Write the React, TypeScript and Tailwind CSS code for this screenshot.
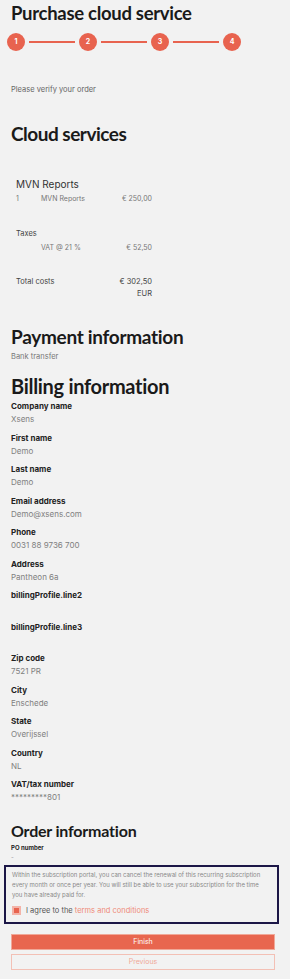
import React from "react";

const H = { fontFamily: "Lato, 'Open Sans', sans-serif" };
const B = { fontFamily: "Inter, 'Open Sans', sans-serif" };

function Field({ label, value }: { label: string; value?: string }) {
  return (
    <div className="flex flex-col">
      <div className="text-[8px] font-bold text-[#222] leading-[13px]">{label}</div>
      <div className="text-[8px] text-[#808080] leading-[13px] min-h-[13px]">{value ?? ""}</div>
    </div>
  );
}

export default function App() {
  const steps = ["1", "2", "3", "4"];
  return (
    <div className="min-h-[979px] w-[290px] bg-[#f2f2f2] pb-4" style={B}>
      <div className="px-[11px] pt-[1px]">
        <h1 className="text-[18.5px] tracking-[-0.3px] font-bold text-[#1a1a1a] leading-[24px]" style={H}>
          Purchase cloud service
        </h1>
      </div>
      <div className="flex items-center pl-[7px] mt-[8px]">
        {steps.map((s, i) => (
          <React.Fragment key={s}>
            <div className="w-[18px] h-[18px] rounded-full bg-[#e8634f] flex items-center justify-center text-white text-[7px] font-bold">
              {s}
            </div>
            {i < 3 && <div className="w-[46px] h-[1.5px] bg-[#e8634f] mx-[4px]" />}
          </React.Fragment>
        ))}
      </div>
      <div className="px-[11px]">
        <p className="text-[7.5px] text-[#666] mt-[34px] leading-[10px]">Please verify your order</p>
        <h2 className="text-[19px] tracking-[-0.5px] font-bold text-[#1a1a1a] mt-[26px] leading-[26px]" style={H}>
          Cloud services
        </h2>
        <div className="pl-[5px] mt-[30px] w-[141px]">
          <div className="text-[10px] text-[#333] leading-[14px]">MVN Reports</div>
          <div className="flex text-[7px] text-[#777] mt-[3px] leading-[10px]">
            <span className="w-[25px]">1</span>
            <span className="flex-1">MVN Reports</span>
            <span>€ 250,00</span>
          </div>
          <div className="text-[7.5px] text-[#444] mt-[25px] leading-[10px]">Taxes</div>
          <div className="flex text-[7px] text-[#777] mt-[4px] leading-[10px]">
            <span className="w-[25px]"></span>
            <span className="flex-1">VAT @ 21 %</span>
            <span>€ 52,50</span>
          </div>
          <div className="flex text-[7.5px] text-[#444] mt-[23px] leading-[12px]">
            <span className="flex-1">Total costs</span>
            <span className="text-right">
              € 302,50
              <br />
              EUR
            </span>
          </div>
        </div>
        <h2 className="text-[19px] tracking-[-0.3px] font-bold text-[#1a1a1a] mt-[25px] leading-[24px]" style={H}>
          Payment information
        </h2>
        <p className="text-[7.5px] text-[#777] leading-[10px] mt-[3px]">Bank transfer</p>
        <h2 className="text-[20px] tracking-[-0.3px] font-bold text-[#1a1a1a] mt-[11px] leading-[26px]" style={H}>
          Billing information
        </h2>
        <div className="flex flex-col gap-[5.5px] mt-[1px]">
          <Field label="Company name" value="Xsens" />
          <Field label="First name" value="Demo" />
          <Field label="Last name" value="Demo" />
          <Field label="Email address" value="Demo@xsens.com" />
          <Field label="Phone" value="0031 88 9736 700" />
          <Field label="Address" value="Pantheon 6a" />
          <Field label="billingProfile.line2" />
          <Field label="billingProfile.line3" />
          <Field label="Zip code" value="7521 PR" />
          <Field label="City" value="Enschede" />
          <Field label="State" value="Overijssel" />
          <Field label="Country" value="NL" />
          <Field label="VAT/tax number" value="*********801" />
        </div>
        <h2 className="text-[16px] tracking-[-0.2px] font-bold text-[#1a1a1a] mt-[17px] leading-[20px]" style={H}>
          Order information
        </h2>
        <div className="text-[6px] font-bold text-[#222] leading-[10px] mt-[2px]">PO number</div>
        <div className="text-[6px] text-[#999] leading-[8px]">-</div>
      </div>
      <div className="mx-[4px] mt-[4px] w-[275px] border-2 border-[#1c1747] px-[6px] pt-[3px] pb-[6px]">
        <p className="text-[6px] text-[#888] leading-[10px] whitespace-nowrap">
          Within the subscription portal, you can cancel the renewal of this recurring subscription
          <br />
          every month or once per year. You will still be able to use your subscription for the time
          <br />
          you have already paid for.
        </p>
        <div className="flex items-center mt-[5px]">
          <div className="w-[9px] h-[9px] bg-[#f3b3a8] flex items-center justify-center">
            <div className="w-[5px] h-[5px] bg-[#e8634f]" />
          </div>
          <span className="ml-[5px] text-[7.5px] text-[#555]">
            I agree to the <span className="text-[#ef8a78]">terms and conditions</span>
          </span>
        </div>
      </div>
      <div className="px-[11px] mt-[10px] w-[286px]">
        <button className="w-full h-[16px] bg-[#e8664f] border border-[#f0a898] text-white text-[7px] flex items-center justify-center">
          Finish
        </button>
        <button className="w-full h-[16px] mt-[4px] border border-[#f3c0b5] text-[#f0a898] text-[7px] flex items-center justify-center">
          Previous
        </button>
      </div>
    </div>
  );
}
